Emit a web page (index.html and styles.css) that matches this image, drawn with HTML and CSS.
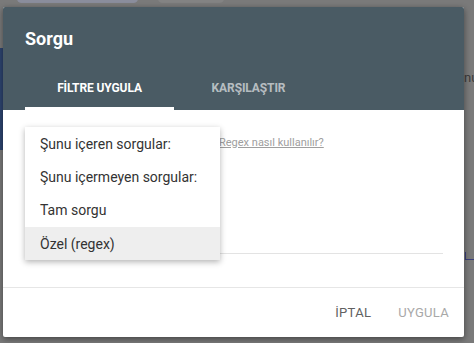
FILE: index.html
```
<!DOCTYPE html>
<html lang="tr">
<head>
<meta charset="utf-8">
<link rel="stylesheet" href="styles.css">
</head>
<body>
<div class="backdrop">
  <div class="bg-chips">
    <span class="chip chip-a"></span>
    <span class="chip chip-b"></span>
  </div>
  <span class="bg-strip"></span>
  <span class="bg-text">nu</span>
  <span class="bg-stroke"></span>

  <div class="dialog">
    <div class="dialog-head">
      <div class="title">Sorgu</div>
      <div class="tabs">
        <div class="tab active">FİLTRE UYGULA</div>
        <div class="tab">KARŞILAŞTIR</div>
      </div>
    </div>
    <div class="dialog-body">
      <div class="row">
        <span class="spacer"></span>
        <a class="help">Regex nasıl kullanılır?</a>
      </div>
      <div class="input-line"></div>
      <ul class="menu">
        <li>Şunu içeren sorgular:</li>
        <li>Şunu içermeyen sorgular:</li>
        <li>Tam sorgu</li>
        <li class="selected">Özel (regex)</li>
      </ul>
    </div>
    <div class="actions">
      <span class="btn cancel">İPTAL</span>
      <span class="btn apply">UYGULA</span>
    </div>
  </div>
</div>
</body>
</html>
```

FILE: styles.css
```
* { box-sizing: border-box; }
html, body {
  margin: 0;
  padding: 0;
  width: 474px;
  height: 343px;
  overflow: hidden;
  font-family: Roboto, "Noto Sans", "Liberation Sans", sans-serif;
}
.backdrop {
  position: relative;
  width: 474px;
  height: 343px;
  background: #7a7a7a;
  padding-top: 7px;
  padding-left: 3px;
}
.bg-chips {
  position: absolute;
  top: 0;
  left: 0;
  width: 474px;
  height: 7px;
}
.chip {
  position: absolute;
  top: -6px;
  height: 9px;
  border-radius: 5px;
}
.chip-a { left: 17px; width: 121px; background: #8a8d9c; }
.chip-b { left: 158px; width: 66px; background: #838383; }
.bg-strip {
  position: absolute;
  left: 0;
  top: 48px;
  width: 3px;
  height: 102px;
  background: #2d4470;
}
.bg-text {
  position: absolute;
  left: 464px;
  top: 70px;
  width: 10px;
  overflow: hidden;
  white-space: nowrap;
  font-size: 13px;
  color: #3c3c3c;
}
.bg-stroke {
  position: absolute;
  left: 465px;
  top: 252px;
  width: 9px;
  height: 8px;
  border-left: 1px solid #3a3f7a;
  border-bottom: 1px solid #3a3f7a;
}
.dialog {
  position: relative;
  width: 461px;
  height: 330px;
  background: #fff;
  border-radius: 2px;
  box-shadow: 0 2px 6px rgba(0,0,0,0.45);
  display: flex;
  flex-direction: column;
}
.dialog-head {
  background: #4a5b64;
  height: 103px;
  padding: 20px 0 0 22px;
  display: flex;
  flex-direction: column;
  border-radius: 2px 2px 0 0;
}
.title {
  color: #fff;
  font-size: 18px;
  font-weight: 700;
  line-height: 24px;
  height: 35px;
}
.tabs {
  display: flex;
  height: 48px;
}
.tab {
  width: 149px;
  display: flex;
  align-items: center;
  justify-content: center;
  padding-top: 4px;
  font-size: 12px;
  font-weight: 700;
  color: rgba(255,255,255,0.62);
  letter-spacing: -0.1px;
}
.tab.active {
  color: #fff;
  border-bottom: 3px solid #fff;
  padding-top: 7px;
}
.dialog-body {
  position: relative;
  height: 178px;
  border-bottom: 1px solid #e6e6e6;
  padding: 24px 22px 0 22px;
}
.row {
  display: flex;
  align-items: center;
  height: 16px;
}
.spacer { width: 194px; }
.help {
  font-size: 11px;
  color: #9e9e9e;
  text-decoration: underline;
}
.input-line {
  margin-top: 103px;
  margin-left: 195px;
  height: 1px;
  background: #e3e3e3;
  width: 223px;
}
.menu {
  position: absolute;
  left: 22px;
  top: 17px;
  width: 195px;
  margin: 0;
  padding: 0;
  list-style: none;
  background: #fff;
  box-shadow: 0 2px 6px rgba(0,0,0,0.3);
  z-index: 2;
}
.menu li {
  height: 33.3px;
  display: flex;
  align-items: center;
  padding-left: 15px;
  font-size: 14px;
  color: #333;
}
.menu li.selected { background: #eeeeee; }
.actions {
  flex: 1;
  display: flex;
  justify-content: flex-end;
  align-items: center;
  padding-right: 15px;
  gap: 27px;
}
.btn {
  font-size: 13px;
  font-weight: 400;
  letter-spacing: 0.3px;
}
.cancel { color: #616161; }
.apply { color: #a8a8a8; }
```
